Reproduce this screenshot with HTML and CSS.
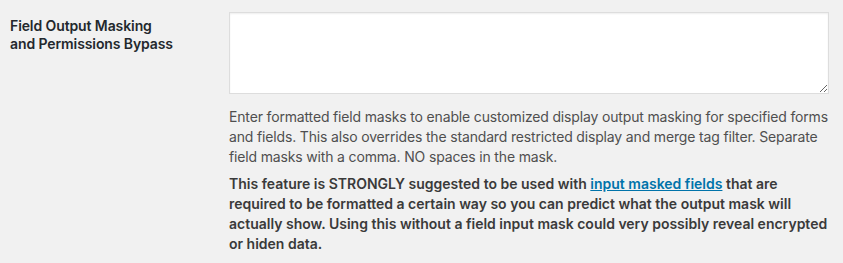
FILE: index.html
```html
<!DOCTYPE html>
<html>
<head>
<meta charset="utf-8">
<link rel="stylesheet" href="styles.css">
</head>
<body>
<div class="row">
  <div class="label">Field Output Masking<br>and Permissions Bypass</div>
  <div class="field">
    <textarea class="mask-input"></textarea>
    <p class="description">Enter formatted field masks to enable customized display output masking for specified forms and fields. This also overrides the standard restricted display and merge tag filter. Separate field masks with a comma. NO spaces in the mask.</p>
    <p class="note">This feature is STRONGLY suggested to be used with <a href="#">input masked fields</a> that are required to be formatted a certain way so you can predict what the output mask will actually show. Using this without a field input mask could very possibly reveal encrypted or hiden data.</p>
  </div>
</div>
</body>
</html>
```
FILE: styles.css
```css
html, body {
  margin: 0;
  padding: 0;
  background: #f1f1f1;
}
body {
  font-family: Inter, "Noto Sans", sans-serif;
  width: 843px;
  height: 263px;
  overflow: hidden;
}
.row {
  display: flex;
  padding-top: 12px;
}
.label {
  width: 219px;
  padding: 5px 0 0 10px;
  font-size: 14px;
  line-height: 18px;
  font-weight: 600;
  letter-spacing: -0.1px;
  color: #23282d;
}
.field {
  width: 600px;
}
.mask-input {
  display: block;
  box-sizing: border-box;
  width: 600px;
  height: 82px;
  margin: 0;
  border: 1px solid #ddd;
  background: #fff;
  box-shadow: inset 0 1px 2px rgba(0,0,0,.07);
  resize: vertical;
  outline: none;
}
.description {
  margin: 13px 0 0;
  font-size: 14px;
  line-height: 20px;
  letter-spacing: -0.16px;
  color: #4f4f4f;
}
.note {
  margin: 7px 0 0;
  font-size: 14px;
  line-height: 20px;
  font-weight: 600;
  color: #3a3a3a;
}
.note a {
  color: #0073aa;
  text-decoration: underline;
}
```
